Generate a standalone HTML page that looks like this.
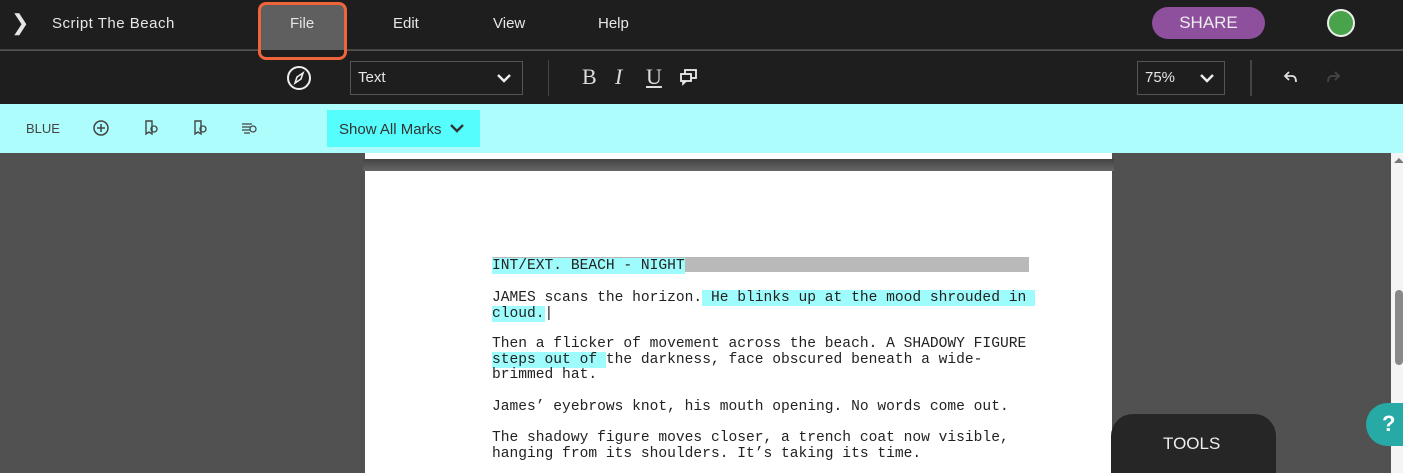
<!DOCTYPE html>
<html style="overflow:hidden;height:473px"><head><meta charset="utf-8"><style>
*{margin:0;padding:0;box-sizing:border-box}
body{width:1403px;height:473px;overflow:hidden;background:#515151;font-family:"Liberation Sans",sans-serif;position:relative}
.abs{position:absolute}
#top{left:0;top:0;width:1403px;height:50px;background:#1e1e1e;border-bottom:1px solid #444}
#tb{left:0;top:51px;width:1403px;height:53px;background:#1e1e1e}
#cy{left:0;top:104px;width:1403px;height:49px;background:#adfdfd}
.w{color:#e6e6e6;font-size:15px}
.mono{font-family:"Liberation Mono",monospace;font-size:14.6px;color:#222;white-space:pre;line-height:15.5px}
.hl{background:#9ffcfc}
</style></head><body>
<div id="top" class="abs"></div>
<div class="abs w" style="left:11px;top:10px;font-size:22px">&#x276F;</div>
<div class="abs w" style="left:52px;top:15px;letter-spacing:.5px">Script The Beach</div>
<div class="abs" style="left:258px;top:2px;width:89px;height:58px;background:#5f5f5f;border:3px solid #f0643c;border-radius:8px;z-index:3"></div>
<div class="abs" style="left:261px;top:50px;width:83px;height:7px;background:#1e1e1e;z-index:3;border-radius:0 0 5px 5px"></div>
<div class="abs w" style="left:290px;top:15px;z-index:4">File</div>
<div class="abs w" style="left:393px;top:15px">Edit</div>
<div class="abs w" style="left:493px;top:15px">View</div>
<div class="abs w" style="left:598px;top:15px">Help</div>
<div class="abs" style="left:1152px;top:7px;width:113px;height:32px;background:#8e4f9c;border-radius:16px;color:#eee;font-size:17px;text-align:center;line-height:32px">SHARE</div>
<div class="abs" style="left:1327px;top:9px;width:28px;height:28px;background:#48a34b;border:2px solid #eee;border-radius:50%"></div>
<div id="tb" class="abs"></div>
<svg class="abs" style="left:286px;top:65px" width="26" height="26" viewBox="0 0 26 26"><circle cx="13" cy="13" r="11" fill="none" stroke="#eee" stroke-width="2"/><path d="M17 8 L11 12 L9 18 L15 14 Z" fill="none" stroke="#eee" stroke-width="1.6"/></svg>
<div class="abs" style="left:350px;top:61px;width:173px;height:34px;border:1px solid #555"></div>
<div class="abs w" style="left:358px;top:69px">Text</div>
<svg class="abs" style="left:496px;top:72px" width="16" height="12"><path d="M2 3 L8 9 L14 3" fill="none" stroke="#eee" stroke-width="2.4"/></svg>
<div class="abs" style="left:548px;top:60px;width:1px;height:36px;background:#444"></div>
<div class="abs" style="left:582px;top:64px;color:#ddd;font-family:'Liberation Serif',serif;font-size:22px">B</div>
<div class="abs" style="left:615px;top:64px;color:#ddd;font-family:'Liberation Serif',serif;font-size:22px;font-style:italic">I</div>
<div class="abs" style="left:646px;top:64px;color:#ddd;font-family:'Liberation Serif',serif;font-size:22px;text-decoration:underline">U</div>
<svg class="abs" style="left:679px;top:68px" width="20" height="18"><rect x="6" y="2" width="11" height="8" fill="none" stroke="#eee" stroke-width="1.8"/><rect x="2" y="6" width="10" height="7" fill="#1e1e1e" stroke="#eee" stroke-width="1.8"/><path d="M4 13 L4 16 L7 13" fill="none" stroke="#eee" stroke-width="1.6"/></svg>
<div class="abs" style="left:1137px;top:61px;width:88px;height:34px;border:1px solid #555"></div>
<div class="abs w" style="left:1145px;top:69px">75%</div>
<svg class="abs" style="left:1199px;top:72px" width="16" height="12"><path d="M2 3 L8 9 L14 3" fill="none" stroke="#eee" stroke-width="2.4"/></svg>
<div class="abs" style="left:1250px;top:60px;width:2px;height:36px;background:#444"></div>
<svg class="abs" style="left:1283px;top:69px" width="16" height="16"><path d="M6 3 L2 7 L6 11 M2 7 H9 Q13 7 13 13" fill="none" stroke="#ddd" stroke-width="1.8"/></svg>
<svg class="abs" style="left:1325px;top:69px" width="16" height="16"><path d="M10 3 L14 7 L10 11 M14 7 H7 Q3 7 3 13" fill="none" stroke="#444" stroke-width="1.8"/></svg>
<div id="cy" class="abs"></div>
<div class="abs" style="left:26px;top:121px;font-size:13px;color:#444">BLUE</div>
<svg class="abs" style="left:92px;top:119px" width="18" height="18"><circle cx="9" cy="9" r="7" fill="none" stroke="#444" stroke-width="1.5"/><path d="M9 5V13M5 9H13" stroke="#444" stroke-width="1.5"/></svg>
<svg class="abs" style="left:143px;top:119px" width="16" height="18"><path d="M3 2H9V15L6 13L3 15Z" fill="none" stroke="#444" stroke-width="1.4"/><circle cx="11" cy="10" r="3" fill="none" stroke="#444" stroke-width="1.3"/></svg>
<svg class="abs" style="left:192px;top:119px" width="16" height="18"><path d="M3 2H9V15L6 13L3 15Z" fill="none" stroke="#444" stroke-width="1.4"/><circle cx="11" cy="10" r="3" fill="none" stroke="#444" stroke-width="1.3"/></svg>
<svg class="abs" style="left:241px;top:121px" width="16" height="14"><path d="M1 3H11M1 6H10M1 9H9M3 12H9" stroke="#444" stroke-width="1.2"/><circle cx="12" cy="8" r="3" fill="none" stroke="#444" stroke-width="1.2"/></svg>
<div class="abs" style="left:327px;top:110px;width:153px;height:37px;background:#55fdfd"></div>
<div class="abs" style="left:339px;top:121px;font-size:15px;color:#333">Show All Marks</div>
<svg class="abs" style="left:449px;top:123px" width="16" height="12"><path d="M2 2 L8 8 L14 2" fill="none" stroke="#333" stroke-width="2.4"/></svg>
<div class="abs" style="left:365px;top:153px;width:747px;height:6px;background:#fff"></div>
<div class="abs" style="left:363px;top:159px;width:751px;height:12px;background:linear-gradient(#444,#666)"></div>
<div class="abs" style="left:365px;top:171px;width:747px;height:302px;background:#fff"></div>
<div class="abs" style="left:492px;top:257px;width:537px;height:15px;background:#b9b9b9"></div>
<div class="abs mono" style="left:492px;top:259px"><span class="hl">INT/EXT. BEACH - NIGHT</span></div>
<div class="abs mono" style="left:492px;top:291px">JAMES scans the horizon.<span class="hl"> He blinks up at the mood shrouded in </span>
<span class="hl">cloud.</span>|</div>
<div class="abs mono" style="left:492px;top:337px">Then a flicker of movement across the beach. A SHADOWY FIGURE
<span class="hl">steps out of </span>the darkness, face obscured beneath a wide-
brimmed hat.</div>
<div class="abs mono" style="left:492px;top:400px">James’ eyebrows knot, his mouth opening. No words come out.</div>
<div class="abs mono" style="left:492px;top:431px">The shadowy figure moves closer, a trench coat now visible,
hanging from its shoulders. It’s taking its time.</div>
<div class="abs" style="left:1391px;top:153px;width:12px;height:320px;background:#f4f4f4"></div>
<div class="abs" style="left:1395px;top:290px;width:8px;height:75px;background:#888;border-radius:4px"></div>
<div class="abs" style="left:1394px;top:158px;width:0;height:0;border-left:5px solid transparent;border-right:5px solid transparent;border-bottom:5px solid #777"></div>
<div class="abs" style="left:1111px;top:414px;width:165px;height:59px;background:#262626;border-radius:22px 22px 0 0"></div>
<div class="abs" style="left:1163px;top:434px;color:#eee;font-size:17px">TOOLS</div>
<div class="abs" style="left:1366px;top:403px;width:37px;height:43px;background:#27a9a6;border-radius:22px 0 0 22px;color:#fff;font-size:22px;font-weight:bold;padding:8px 0 0 16px">?</div>
</body></html>
